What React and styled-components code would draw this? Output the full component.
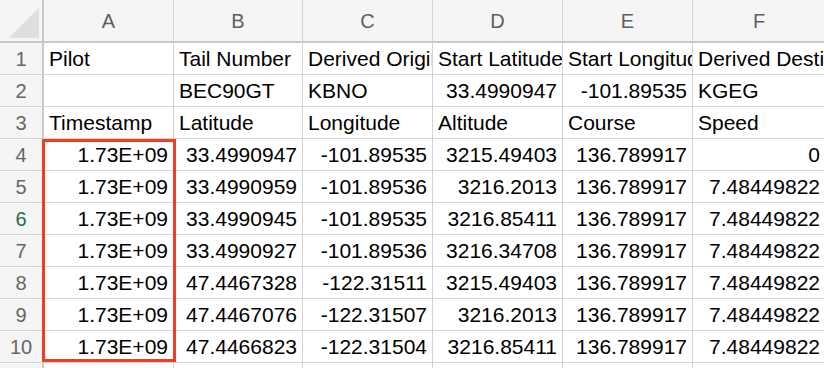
import React from "react";
import styled, { createGlobalStyle } from "styled-components";

const Global = createGlobalStyle`
  html, body { margin: 0; padding: 0; background: #ffffff; }
  body { width: 824px; height: 368px; overflow: hidden; }
`;

const Sheet = styled.div`
  position: relative;
  display: grid;
  grid-template-columns: 44px 130px 129px 130px 130px 130px 133px;
  grid-template-rows: 43px repeat(11, 32px);
  width: 824px;
  height: 368px;
  overflow: hidden;
  font-family: "Liberation Sans", Arial, sans-serif;
  font-size: 21px;
  color: #000;
  background: #fff;
`;

const Corner = styled.div`
  position: relative;
  background: #f5f5f5;
  border-right: 2px solid #c9c9c9;
  border-bottom: 2px solid #c9c9c9;
  box-sizing: border-box;
  overflow: hidden;
  &::after {
    content: "";
    position: absolute;
    right: 3px;
    bottom: 3px;
    width: 0;
    height: 0;
    border-left: 30px solid transparent;
    border-bottom: 30px solid #dedede;
  }
`;

const ColHead = styled.div`
  display: flex;
  align-items: center;
  justify-content: center;
  background: #f5f5f5;
  color: #5f5f5f;
  border-right: 1px solid #d4d4d4;
  border-bottom: 2px solid #c9c9c9;
  box-sizing: border-box;
  padding-top: 2px;
  font-size: 20px;
`;

const RowHead = styled.div`
  display: flex;
  align-items: center;
  justify-content: center;
  background: #f5f5f5;
  color: ${(p) => (p.$active ? "#1e6e3f" : "#666666")};
  border-right: 2px solid ${(p) => (p.$active ? "#1e7145" : "#c9c9c9")};
  border-bottom: 1px solid #d4d4d4;
  box-sizing: border-box;
  padding-top: 1px;
  font-size: 20px;
`;

const Cell = styled.div`
  display: flex;
  align-items: center;
  justify-content: ${(p) => (p.$num ? "flex-end" : "flex-start")};
  padding: 1px 5px 0 5px;
  border-right: 1px solid #d4d4d4;
  border-bottom: 1px solid #d4d4d4;
  box-sizing: border-box;
  white-space: nowrap;
  overflow: hidden;
  min-width: 0;
`;

const Highlight = styled.div`
  position: absolute;
  left: 42px;
  top: 139px;
  width: 134px;
  height: 223px;
  border: 3px solid #f23c24;
  box-sizing: border-box;
  pointer-events: none;
`;

const cols = ["A", "B", "C", "D", "E", "F"];

const n = (v) => ({ v, num: true });
const rows = [
  ["Pilot", "Tail Number", "Derived Origin", "Start Latitude", "Start Longitude", "Derived Destination"],
  ["", "BEC90GT", "KBNO", n("33.4990947"), n("-101.89535"), "KGEG"],
  ["Timestamp", "Latitude", "Longitude", "Altitude", "Course", "Speed"],
  [n("1.73E+09"), n("33.4990947"), n("-101.89535"), n("3215.49403"), n("136.789917"), n("0")],
  [n("1.73E+09"), n("33.4990959"), n("-101.89536"), n("3216.2013"), n("136.789917"), n("7.48449822")],
  [n("1.73E+09"), n("33.4990945"), n("-101.89535"), n("3216.85411"), n("136.789917"), n("7.48449822")],
  [n("1.73E+09"), n("33.4990927"), n("-101.89536"), n("3216.34708"), n("136.789917"), n("7.48449822")],
  [n("1.73E+09"), n("47.4467328"), n("-122.31511"), n("3215.49403"), n("136.789917"), n("7.48449822")],
  [n("1.73E+09"), n("47.4467076"), n("-122.31507"), n("3216.2013"), n("136.789917"), n("7.48449822")],
  [n("1.73E+09"), n("47.4466823"), n("-122.31504"), n("3216.85411"), n("136.789917"), n("7.48449822")],
  ["", "", "", "", "", ""],
];

export default function App() {
  return (
    <>
      <Global />
      <Sheet>
        <Corner />
        {cols.map((c) => (
          <ColHead key={c}>{c}</ColHead>
        ))}
        {rows.map((r, i) => (
          <React.Fragment key={i}>
            <RowHead $active={i === 5}>{i < 10 ? i + 1 : ""}</RowHead>
            {r.map((cell, j) => {
              const isObj = typeof cell === "object";
              return (
                <Cell key={j} $num={isObj}>
                  {isObj ? cell.v : cell}
                </Cell>
              );
            })}
          </React.Fragment>
        ))}
        <Highlight />
      </Sheet>
    </>
  );
}
